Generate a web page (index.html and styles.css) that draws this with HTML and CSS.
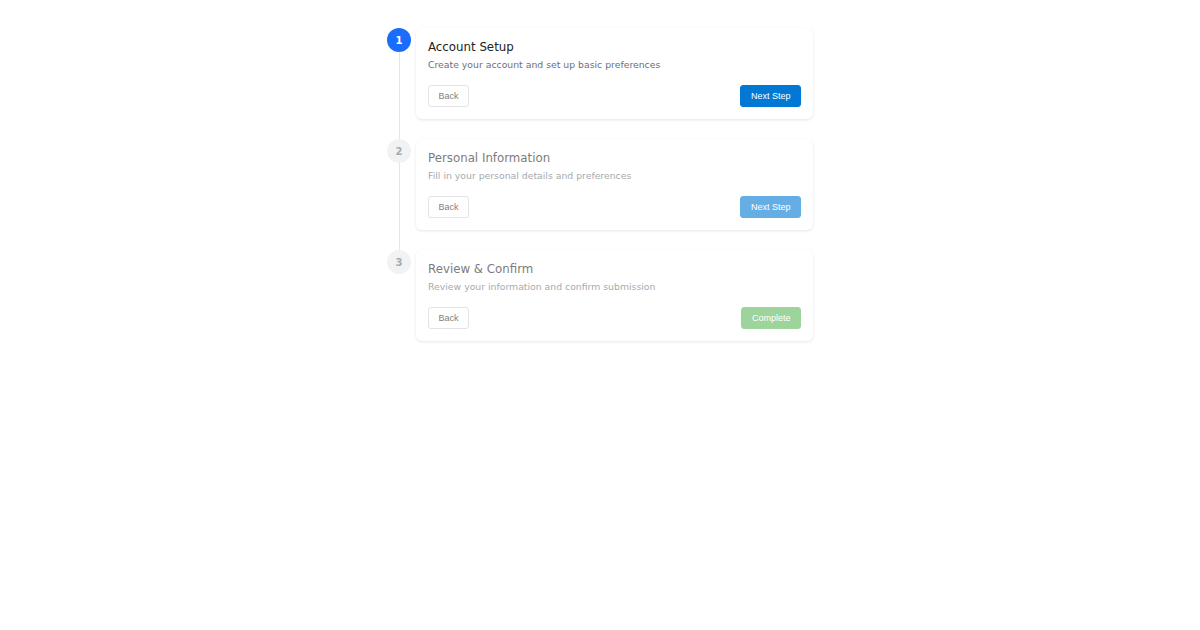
FILE: index.html
```html
<!DOCTYPE html>
<html lang="en">
<head>
    <meta charset="UTF-8">
    <meta name="viewport" content="width=device-width, initial-scale=1.0">
    <title>Setup Steps</title>
    <link rel="stylesheet" href="styles.css">
</head>

<body>
    <div class="stepper">
        <div class="step active">
            <div class="step-marker">
                <span class="step-num">1</span>
                <span class="step-line"></span>
            </div>
            <div class="step-card">
                <h4>Account Setup</h4>
                <p>Create your account and set up basic preferences</p>
                <div class="step-actions">
                    <button class="btn-back">Back</button>
                    <button class="btn-next">Next Step</button>
                </div>
            </div>
        </div>

        <div class="step">
            <div class="step-marker">
                <span class="step-num">2</span>
                <span class="step-line"></span>
            </div>
            <div class="step-card">
                <h4>Personal Information</h4>
                <p>Fill in your personal details and preferences</p>
                <div class="step-actions">
                    <button class="btn-back">Back</button>
                    <button class="btn-next">Next Step</button>
                </div>
            </div>
        </div>

        <div class="step">
            <div class="step-marker">
                <span class="step-num">3</span>
            </div>
            <div class="step-card">
                <h4>Review &amp; Confirm</h4>
                <p>Review your information and confirm submission</p>
                <div class="step-actions">
                    <button class="btn-back">Back</button>
                    <button class="btn-done">Complete</button>
                </div>
            </div>
        </div>
    </div>
</body>
</html>
```

FILE: styles.css
```css
/* General */
body {
    font-family: "DejaVu Sans", sans-serif;
    background-color: #fff;
    color: #222;
    margin: 0;
    padding: 0;
}

.stepper {
    width: 426px;
    margin: 0 auto;
    padding-top: 28px;
}

/* Step row */
.step {
    display: flex;
    gap: 5px;
}

.step-marker {
    display: flex;
    flex-direction: column;
    align-items: center;
    width: 24px;
    flex-shrink: 0;
}

.step-num {
    width: 24px;
    height: 24px;
    border-radius: 50%;
    background-color: #f1f2f4;
    color: #a5a9b0;
    font-size: 10px;
    font-weight: bold;
    display: flex;
    align-items: center;
    justify-content: center;
}

.step.active .step-num {
    background-color: #1a6cfb;
    color: #fff;
}

.step-line {
    flex: 1;
    width: 1px;
    background-color: #e3e5e8;
}

/* Card */
.step-card {
    flex: 1;
    margin-bottom: 20px;
    padding: 12px 12px 12px 12px;
    background-color: #fff;
    border-radius: 6px;
    box-shadow: 0 1px 3px rgba(0, 0, 0, 0.1);
}

.step-card h4 {
    margin: 0;
    font-size: 11.8px;
    font-weight: normal;
    line-height: 14px;
    color: #222;
}

.step-card p {
    margin: 5px 0 0;
    font-size: 9.3px;
    line-height: 12px;
    color: #6b7078;
}

.step:not(.active) .step-card h4,
.step:not(.active) .step-card p,
.step:not(.active) .step-card button {
    opacity: 0.6;
}

.step:not(.active) .step-card .btn-back {
    opacity: 1;
}

/* Buttons */
.step-actions {
    display: flex;
    justify-content: space-between;
    margin-top: 14px;
}

.step-actions button {
    font-family: "Liberation Sans", Arial, sans-serif;
    font-size: 9px;
    height: 22px;
    padding: 0 9.5px;
    border-radius: 3px;
    cursor: pointer;
}

.btn-back {
    background-color: #fff;
    border: 1px solid #e2e3e6;
    color: #808080;
}

.btn-next {
    background-color: #0078d4;
    border: 1px solid #0078d4;
    color: #fff;
}

.btn-done {
    background-color: #5cb85c;
    border: 1px solid #5cb85c;
    color: #fff;
}
```
